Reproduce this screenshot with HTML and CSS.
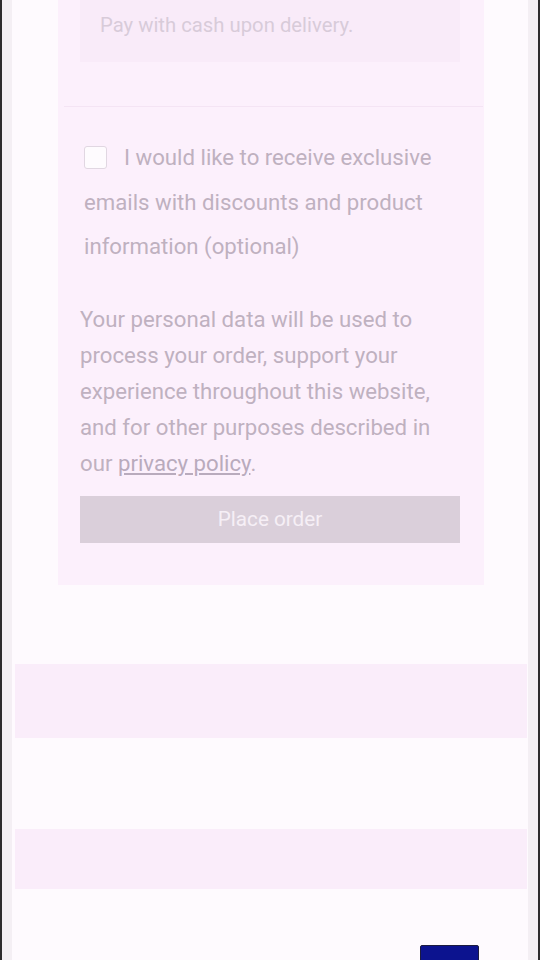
FILE: index.html
```html
<!DOCTYPE html>
<html lang="en">
<head>
<meta charset="utf-8">
<title>Checkout</title>
<link rel="stylesheet" href="styles.css">
</head>
<body>
<div class="frame">
  <div class="gutter gutter-left"></div>
  <main class="main">
    <section class="card">
      <div class="payment-box">
        <p class="payment-text">Pay with cash upon delivery.</p>
      </div>
      <div class="divider"></div>
      <label class="optin">
        <span class="checkbox"></span>I would like to receive exclusive emails with discounts and product information (optional)
      </label>
      <p class="privacy">Your personal data will be used to process your order, support your experience throughout this website, and for other purposes described in our <a href="#" class="link">privacy policy</a>.</p>
      <button class="place-order" type="button">Place order</button>
    </section>
    <div class="band band-pink band-1"></div>
    <div class="band band-white band-2"></div>
    <div class="band band-pink band-3"></div>
    <div class="band band-white band-4">
      <span class="navy-btn"></span>
    </div>
  </main>
  <div class="gutter gutter-right"></div>
</div>
</body>
</html>
```

FILE: styles.css
```css
html, body {
  margin: 0;
  padding: 0;
  height: 100%;
  overflow: hidden;
}
body {
  background: #fefafe;
  font-family: Roboto, "Liberation Sans", Arial, sans-serif;
}
.frame {
  display: flex;
  height: 960px;
  border-left: 2px solid #2e2b2e;
  border-right: 2px solid #2e2b2e;
  box-sizing: border-box;
}
.gutter {
  flex: 0 0 10px;
  background: #f4eff4;
}
.main {
  flex: 1 1 auto;
  display: flex;
  flex-direction: column;
  background: #fefafe;
  overflow: hidden;
}
.main > * {
  flex-shrink: 0;
}
.card {
  margin-left: 46px;
  width: 426px;
  box-sizing: border-box;
  padding: 0 24px 42px 22px;
  background: #fcf0fc;
  display: flex;
  flex-direction: column;
}
.payment-box {
  height: 62px;
  box-sizing: border-box;
  padding: 13px 20px 0 20px;
  background: #f9ebf9;
}
.payment-text {
  margin: 0;
  font-size: 20.3px;
  line-height: 24px;
  color: #d8cbd9;
}
.divider {
  height: 1px;
  background: #f4e4f4;
  margin: 44px -23px 28px -16px;
}
.optin {
  display: block;
  padding-left: 4px;
  font-size: 22.2px;
  line-height: 44.5px;
  color: #bfb1c0;
}
.checkbox {
  display: inline-block;
  width: 23px;
  height: 23px;
  box-sizing: border-box;
  border: 1.5px solid #e1d7e2;
  border-radius: 3px;
  background: #fefbfe;
  vertical-align: -4px;
  margin-right: 17px;
}
.privacy {
  margin: 32px 0 0 0;
  font-size: 22.2px;
  line-height: 36px;
  color: #bfb1c0;
}
.link {
  color: #b9abbd;
  text-decoration: underline;
  text-underline-offset: 2px;
}
.place-order {
  margin-top: 15px;
  height: 47px;
  border: none;
  background: #dacfda;
  color: #f6eff6;
  font-family: Roboto, "Liberation Sans", Arial, sans-serif;
  font-size: 20.7px;
  padding: 0;
}
.band {
  margin: 0 1px 0 3px;
}
.band-1 {
  margin-top: 79px;
  height: 74px;
  background: #faedfa;
}
.band-2 {
  height: 91px;
  background: #fefafe;
}
.band-3 {
  height: 60px;
  background: #faedfa;
}
.band-4 {
  flex: 1 0 auto;
  background: #fefafe;
  padding: 56px 0 0 405px;
}
.navy-btn {
  display: block;
  width: 59px;
  height: 30px;
  box-sizing: border-box;
  background: #0c138f;
  border: 1px solid #1c1c40;
  border-radius: 2px;
}
```
